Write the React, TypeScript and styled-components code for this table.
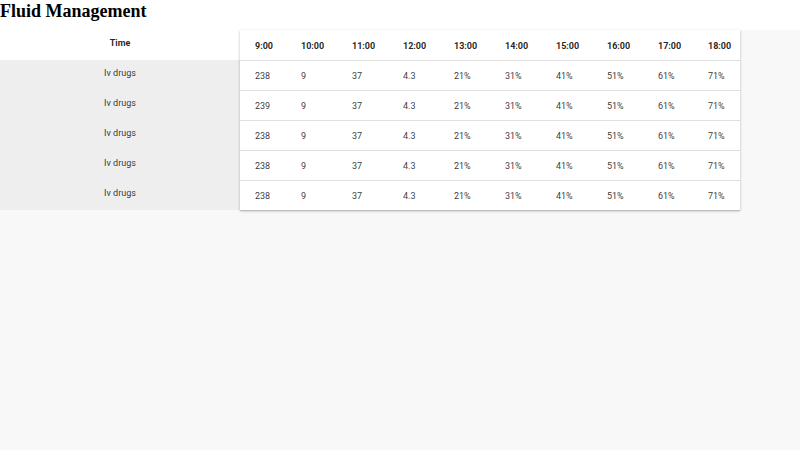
import styled, { createGlobalStyle } from "styled-components";

const hours = ["9:00", "10:00", "11:00", "12:00", "13:00", "14:00", "15:00", "16:00", "17:00", "18:00"];
const colWidths = [46, 51, 51, 51, 51, 51, 51, 51, 50, 47];

const rows = [
  ["238", "9", "37", "4.3", "21%", "31%", "41%", "51%", "61%", "71%"],
  ["239", "9", "37", "4.3", "21%", "31%", "41%", "51%", "61%", "71%"],
  ["238", "9", "37", "4.3", "21%", "31%", "41%", "51%", "61%", "71%"],
  ["238", "9", "37", "4.3", "21%", "31%", "41%", "51%", "61%", "71%"],
  ["238", "9", "37", "4.3", "21%", "31%", "41%", "51%", "61%", "71%"],
];

const GlobalStyle = createGlobalStyle`
  body {
    margin: 0;
    background: #ffffff;
    font-family: Roboto, "Liberation Sans", sans-serif;
  }
`;

export default function App() {
  return (
    <>
      <GlobalStyle />
      <Title>Fluid Management</Title>
      <Board>
        <LabelColumn>
          <LabelHead>Time</LabelHead>
          {rows.map((_, i) => (
            <LabelCell key={i}>Iv drugs</LabelCell>
          ))}
        </LabelColumn>
        <Paper>
          <Row>
            {hours.map((h, i) => (
              <HeadCell key={h} $width={colWidths[i]}>
                {h}
              </HeadCell>
            ))}
          </Row>
          {rows.map((r, ri) => (
            <Row key={ri} $divider>
              {r.map((v, i) => (
                <Cell key={i} $width={colWidths[i]}>
                  {v}
                </Cell>
              ))}
            </Row>
          ))}
        </Paper>
      </Board>
    </>
  );
}

const Title = styled.h1`
  margin: 0;
  height: 30px;
  font-family: "Liberation Serif", "Times New Roman", serif;
  font-size: 18px;
  line-height: 22px;
  font-weight: bold;
  color: #000;
`;

const Board = styled.div`
  display: flex;
  align-items: flex-start;
  background: #f8f8f8;
  min-height: calc(100vh - 30px);
`;

const LabelColumn = styled.div`
  width: 240px;
  display: flex;
  flex-direction: column;
`;

const LabelHead = styled.div`
  height: 30px;
  background: #ffffff;
  display: flex;
  align-items: center;
  justify-content: center;
  padding-bottom: 5px;
  box-sizing: border-box;
  font-size: 9px;
  font-weight: 700;
  color: rgba(0, 0, 0, 0.87);
`;

const LabelCell = styled.div`
  height: 30px;
  background: #eeeeee;
  display: flex;
  align-items: center;
  justify-content: center;
  padding-bottom: 4px;
  box-sizing: border-box;
  font-size: 9px;
  color: rgba(0, 0, 0, 0.8);
`;

const Paper = styled.div`
  width: 500px;
  background: #ffffff;
  box-shadow: 0 1px 3px rgba(0, 0, 0, 0.2), 0 1px 1px rgba(0, 0, 0, 0.14);
`;

const Row = styled.div<{ $divider?: boolean }>`
  display: flex;
  height: 30px;
  border-top: ${p => (p.$divider ? "1px solid #e0e0e0" : "none")};
  box-sizing: border-box;
`;

const HeadCell = styled.div<{ $width: number }>`
  width: ${p => p.$width}px;
  padding-left: 15px;
  box-sizing: border-box;
  display: flex;
  align-items: center;
  padding-top: 1px;
  font-size: 9px;
  font-weight: 700;
  color: rgba(0, 0, 0, 0.87);
  white-space: nowrap;
`;

const Cell = styled.div<{ $width: number }>`
  width: ${p => p.$width}px;
  padding-left: 15px;
  box-sizing: border-box;
  display: flex;
  align-items: center;
  padding-top: 1px;
  font-size: 9px;
  color: rgba(0, 0, 0, 0.8);
  white-space: nowrap;
`;
